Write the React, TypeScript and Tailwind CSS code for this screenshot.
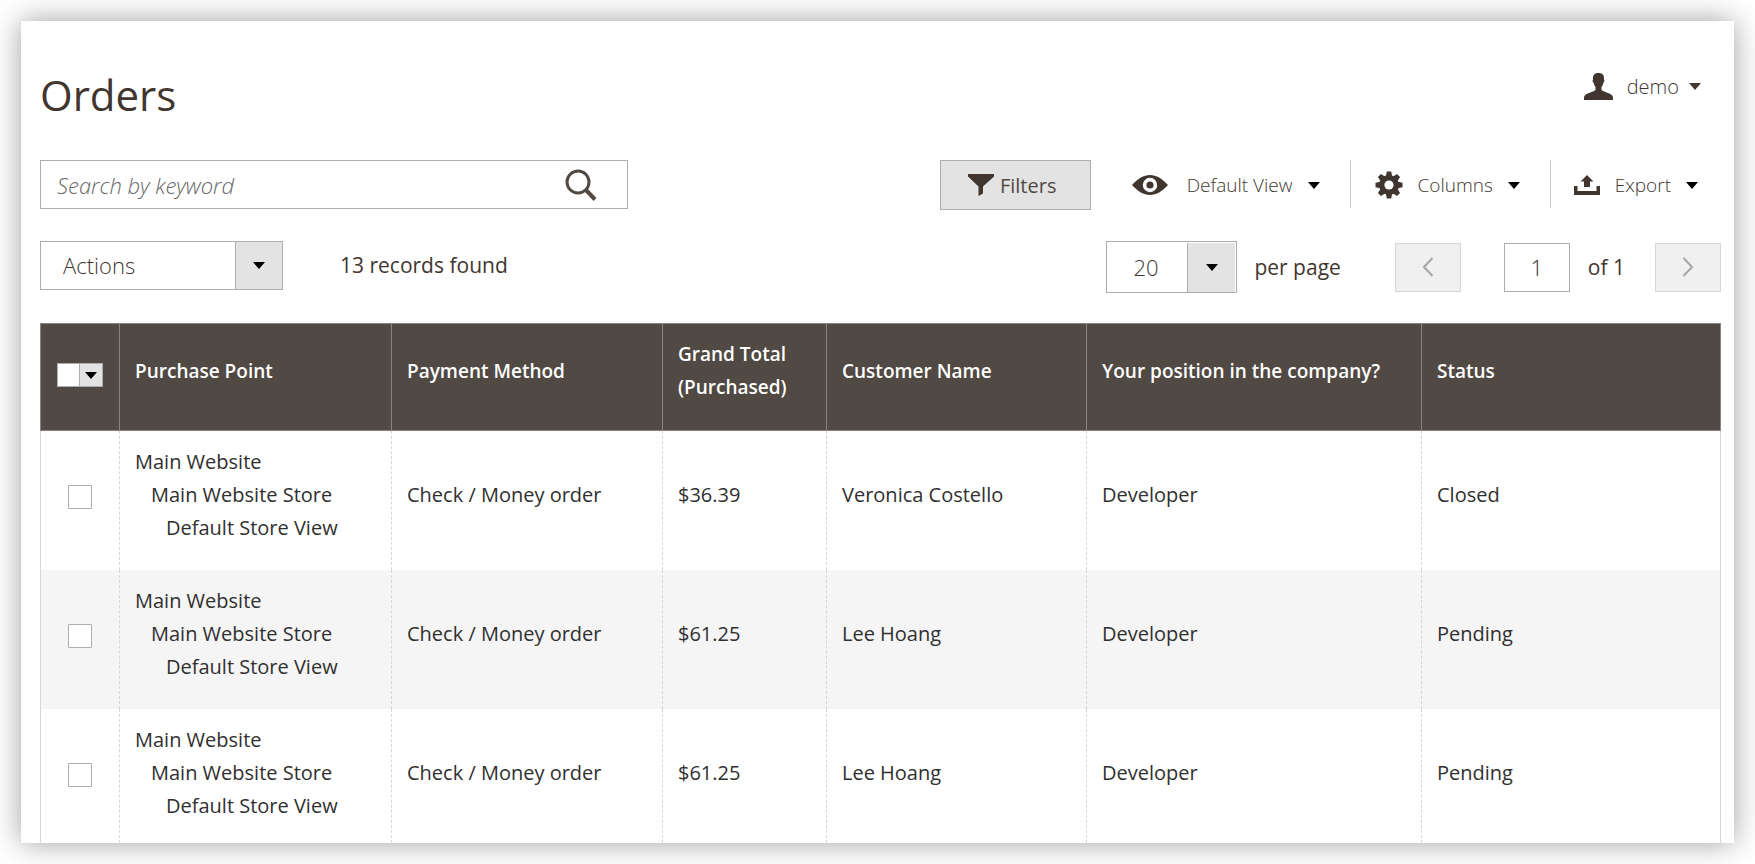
import type { ReactNode } from "react";

interface Order {
  total: string;
  customer: string;
  position: string;
  status: string;
}

const orders: Order[] = [
  { total: "$36.39", customer: "Veronica Costello", position: "Developer", status: "Closed" },
  { total: "$61.25", customer: "Lee Hoang", position: "Developer", status: "Pending" },
  { total: "$61.25", customer: "Lee Hoang", position: "Developer", status: "Pending" },
];

const Caret = ({ className = "" }: { className?: string }) => (
  <svg viewBox="0 0 12 7" className={`h-[7px] w-3 shrink-0 fill-current ${className}`}>
    <path d="M0 0h12L6 7z" />
  </svg>
);

const SearchIcon = () => (
  <svg viewBox="0 0 32 32" className="size-8 fill-none stroke-[#514943]">
    <circle cx="13" cy="13" r="11" strokeWidth="3" />
    <path d="M20.5 20.5l9.5 10" strokeWidth="4" />
  </svg>
);

const FunnelIcon = () => (
  <svg viewBox="0 0 26 22" className="h-[22px] w-[26px] fill-[#41362f]">
    <path d="M0 0h26v2.500L15 12.500v7L10.500 22v-9.500L0 2.500z" />
  </svg>
);

const EyeIcon = () => (
  <svg viewBox="0 0 36 20" className="mr-1 h-5 w-9 fill-[#41362f]">
    <path
      fillRule="evenodd"
      d="M0 10C6 3.500 11.500 0 18 0s12 3.500 18 10c-6 6.500-11.500 10-18 10S6 16.500 0 10zM18 2.800a7.200 7.200 0 1 0 0 14.400a7.200 7.200 0 1 0 0-14.400z"
    />
    <circle cx="18" cy="10" r="3.600" />
  </svg>
);

const GearIcon = () => (
  <svg viewBox="0 0 28 28" className="size-7 fill-[#41362f]">
    <g>
      {[0, 45, 90, 135].map((angle) => (
        <path key={angle} d="M11.800 0.500h4.400l1 5v17l-1 5h-4.400l-1-5v-17z" transform={`rotate(${angle} 14 14)`} />
      ))}
      <circle cx="14" cy="14" r="10" />
    </g>
    <circle cx="14" cy="14" r="4.600" fill="#fff" />
  </svg>
);

const ExportIcon = () => (
  <svg viewBox="0 0 26 20" className="h-5 w-[26px] fill-[#41362f]">
    <path d="M13 0l6.500 6.500H16V12h-6V6.500H6.500z" />
    <path d="M0 11h3.500v5h19v-5H26v9H0z" />
  </svg>
);

const UserIcon = () => (
  <svg viewBox="0 0 29 27" className="h-[27px] w-[29px] fill-[#41362f]">
    <path d="M14.500 0c4 0 5.800 2 5.500 6.500c.8.500.4 3-.7 3.500c-.4 2-1 3-1.800 4v3c2 2.500 11.500 3 11.500 7.500V27H0v-2.500C0 20 9.500 19.500 11.500 17v-3c-.8-1-1.400-2-1.800-4C8.600 9.500 8.200 7 9 6.500C8.700 2 10.500 0 14.500 0z" />
  </svg>
);

const Chevron = ({ flip = false }: { flip?: boolean }) => (
  <svg viewBox="0 0 12 20" className={`h-5 w-3 fill-none stroke-[#a8a5a3] ${flip ? "-scale-x-100" : ""}`}>
    <path d="M10.500 1L2 10l8.500 9" strokeWidth="2" />
  </svg>
);

const ToolbarButton = ({ icon, label }: { icon: ReactNode; label: string }) => (
  <button type="button" className="flex h-12 items-center pt-0.5 text-[19px] font-light">
    {icon}
    <span className="ml-[15px]">{label}</span>
    <Caret className="ml-[15px] text-black" />
  </button>
);

const headCell = "border border-[#8a837f] px-[15px] pt-[14px] pb-[26px] text-left text-[19px] font-semibold";
const bodyCell = "border-x border-dashed border-[#d6d6d6] px-[15px] pt-[14px] pb-[26px]";
const pagerButton = "flex h-[49px] w-[66px] items-center justify-center border border-[#d6d6d6] bg-[#f0f0f0]";

export default function App() {
  return (
    <div className="h-screen bg-white p-[21px] font-['Open_Sans',sans-serif] text-[20px] leading-[33px] text-[#41362f]">
      <main className="h-full overflow-hidden bg-white pr-[13px] pl-[19px] shadow-[0_0_28px_rgba(0,0,0,0.38)]">
        <header className="flex items-start justify-between pt-11 pr-5">
          <h1 className="text-[42px] leading-[60px]">Orders</h1>
          <button type="button" className="flex items-center pt-[5px] font-light">
            <UserIcon />
            <span className="ml-[14px]">demo</span>
            <Caret className="ml-[10px]" />
          </button>
        </header>

        <section className="mt-[35px] flex items-start justify-between">
          <form className="flex h-[49px] w-[588px] items-center border border-[#adadad]" onSubmit={(e) => e.preventDefault()}>
            <input
              type="text"
              aria-label="Search by keyword"
              placeholder="Search by keyword"
              className="h-full min-w-0 flex-1 px-4 text-[22px] italic outline-none placeholder:font-light placeholder:text-[#666]"
            />
            <button type="submit" aria-label="Search" className="mr-[30px]">
              <SearchIcon />
            </button>
          </form>
          <div className="flex items-start">
            <button type="button" className="mr-[41px] flex h-[50px] w-[151px] items-center justify-center gap-1.5 border border-[#adadad] bg-[#e3e3e3] pr-1.5 text-[#514943]">
              <FunnelIcon />
              Filters
            </button>
            <ToolbarButton icon={<EyeIcon />} label="Default View" />
            <div className="ml-[30px] border-l border-[#ccc] pl-6">
              <ToolbarButton icon={<GearIcon />} label="Columns" />
            </div>
            <div className="ml-[30px] border-l border-[#ccc] px-[23px]">
              <ToolbarButton icon={<ExportIcon />} label="Export" />
            </div>
          </div>
        </section>

        <section className="mt-[31px] flex items-start justify-between text-[21px]">
          <div className="flex items-center">
            <div className="relative flex h-[49px] w-[243px] border border-[#adadad]">
              <select aria-label="Actions" className="w-full appearance-none pl-[22px] text-[22px] font-light outline-none">
                <option>Actions</option>
              </select>
              <span className="pointer-events-none absolute inset-y-0 right-0 flex w-[47px] items-center justify-center border-l border-[#adadad] bg-[#e3e3e3] text-black">
                <Caret />
              </span>
            </div>
            <p className="ml-[57px]">13 records found</p>
          </div>
          <div className="flex items-center">
            <div className="relative flex h-[52px] w-[131px] border border-[#adadad]">
              <select id="per-page" className="w-full appearance-none pl-[26px] text-[22px] font-light outline-none">
                <option>20</option>
              </select>
              <span className="pointer-events-none absolute top-px right-px bottom-0 flex w-12 items-center justify-center border-l border-[#adadad] bg-[#e3e3e3] text-black">
                <Caret />
              </span>
            </div>
            <label htmlFor="per-page" className="ml-[17px]">
              per page
            </label>
            <button type="button" disabled aria-label="Previous page" className={`ml-[54px] ${pagerButton}`}>
              <Chevron />
            </button>
            <input
              id="page"
              type="text"
              defaultValue="1"
              className="ml-[43px] h-[49px] w-[66px] border border-[#adadad] text-center text-[22px] font-light text-[#303030] outline-none"
            />
            <label htmlFor="page" className="ml-[18px]">
              of 1
            </label>
            <button type="button" disabled aria-label="Next page" className={`ml-[30px] ${pagerButton}`}>
              <Chevron flip />
            </button>
          </div>
        </section>

        <table className="mt-[30px] w-full table-fixed border-collapse text-[#303030]">
          <colgroup>
            <col className="w-[79px]" />
            <col className="w-[272px]" />
            <col className="w-[271px]" />
            <col className="w-[164px]" />
            <col className="w-[260px]" />
            <col className="w-[335px]" />
            <col />
          </colgroup>
          <thead className="bg-[#514943] text-white">
            <tr>
              <th className="border border-[#8a837f]">
                <div className="mx-auto mb-1 flex h-6 w-[46px] border border-[#adadad] bg-white">
                  <input type="checkbox" aria-label="Select all orders" className="flex-1 appearance-none" />
                  <button type="button" aria-label="Selection options" className="flex w-[23px] items-center justify-center border-l border-[#adadad] bg-[#e3e3e3] text-black">
                    <Caret />
                  </button>
                </div>
              </th>
              <th className={headCell}>Purchase Point</th>
              <th className={headCell}>Payment Method</th>
              <th className={headCell}>Grand Total (Purchased)</th>
              <th className={headCell}>Customer Name</th>
              <th className={headCell}>Your position in the company?</th>
              <th className={headCell}>Status</th>
            </tr>
          </thead>
          <tbody>
            {orders.map((order, i) => (
              <tr key={i} className="border-x border-[#d6d6d6] even:bg-[#f5f5f5]">
                <td className="text-center">
                  <input type="checkbox" aria-label={`Select order ${i + 1}`} className="mt-[2px] size-6 appearance-none rounded-[1px] border border-[#adadad] bg-white" />
                </td>
                <td className={bodyCell}>
                  <div>Main Website</div>
                  <div className="pl-4">Main Website Store</div>
                  <div className="pl-[31px]">Default Store View</div>
                </td>
                <td className={bodyCell}>Check / Money order</td>
                <td className={bodyCell}>{order.total}</td>
                <td className={bodyCell}>{order.customer}</td>
                <td className={bodyCell}>{order.position}</td>
                <td className="px-[15px] pt-[14px] pb-[26px]">{order.status}</td>
              </tr>
            ))}
          </tbody>
        </table>
      </main>
    </div>
  );
}
